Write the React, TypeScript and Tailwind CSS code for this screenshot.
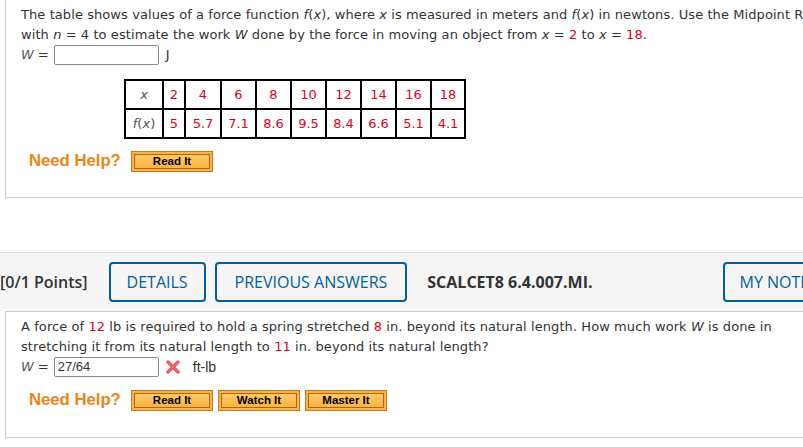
import React from "react";

const red = "text-[#e2001a]";

function HelpBtn({ label }: { label: string }) {
  return (
    <div className="w-[82px] h-[21px] border border-[#c27a25] bg-[#fbb443] p-[2px] flex">
      <div className="flex-1 border border-[#a9661c] bg-gradient-to-b from-[#ffc964] to-[#fbb443] flex items-center justify-center text-[11.5px] font-bold text-black leading-none" style={{ fontFamily: "Arial, 'Liberation Sans', sans-serif" }}>
        {label}
      </div>
    </div>
  );
}

function NeedHelp({ buttons }: { buttons: string[] }) {
  return (
    <div className="flex items-center ml-[8px]">
      <span className="w-[102px] text-[16.7px] font-bold text-[#ef8416] leading-none" style={{ fontFamily: "Arial, 'Liberation Sans', sans-serif" }}>
        Need Help?
      </span>
      <div className="flex gap-[5px]">
        {buttons.map((b) => (
          <HelpBtn key={b} label={b} />
        ))}
      </div>
    </div>
  );
}

const xs = ["2", "4", "6", "8", "10", "12", "14", "16", "18"];
const fs = ["5", "5.7", "7.1", "8.6", "9.5", "8.4", "6.6", "5.1", "4.1"];
const widths = ["w-[22px]", "w-[36px]", "w-[35px]", "w-[35px]", "w-[35px]", "w-[35px]", "w-[35px]", "w-[35px]", "w-[34px]"];

export default function App() {
  return (
    <div className="w-[803px] h-[447px] overflow-hidden bg-white text-[#333]" style={{ fontFamily: "Verdana, 'DejaVu Sans', sans-serif" }}>
      {/* Panel 1 */}
      <div className="ml-[5px] w-[900px] h-[198px] border-l border-b border-[#ccc] pl-[15px] pt-[5px] text-[13px] leading-[20px]">
        <div className="whitespace-nowrap tracking-[0.08px]">
          The table shows values of a force function <i>f</i>(<i>x</i>), where <i>x</i> is measured in meters and <i>f</i>(<i>x</i>) in newtons. Use the Midpoint Rule
        </div>
        <div className="whitespace-nowrap tracking-[0.08px]">
          with <i>n</i> = 4 to estimate the work <i>W</i> done by the force in moving an object from <i>x</i> = <span className={red}>2</span> to <i>x</i> = <span className={red}>18</span>.
        </div>
        <div className="flex items-center h-[20px]">
          <i className="text-[#555]">W</i>
          <span className="ml-[4px]">=</span>
          <div className="ml-[5px] w-[105px] h-[20px] border border-[#888] rounded-[2px]" />
          <span className="ml-[7px]">J</span>
        </div>
        <table className="mt-[14px] ml-[103px] border-collapse text-center">
          <tbody>
            <tr className="h-[29px]">
              <td className="w-[38px] border-2 border-black italic text-[#555]">x</td>
              {xs.map((v, i) => (
                <td key={i} className={`${widths[i]} border-2 border-black ${red}`}>{v}</td>
              ))}
            </tr>
            <tr className="h-[29px]">
              <td className="border-2 border-black text-[#555]"><i>f</i>(<i>x</i>)</td>
              {fs.map((v, i) => (
                <td key={i} className={`border-2 border-black ${red}`}>{v}</td>
              ))}
            </tr>
          </tbody>
        </table>
        <div className="mt-[12px]">
          <NeedHelp buttons={["Read It"]} />
        </div>
      </div>

      <div className="h-[54px]" />

      {/* Header bar */}
      <div className="border-t border-[#ddd] bg-[#f5f5f5] h-[59px] flex items-center text-[16px]" style={{ fontFamily: "'Open Sans', sans-serif" }}>
        <span className="font-semibold text-[#333] text-[16px]">[0/1 Points]</span>
        <div className="ml-[21px] h-[40px] px-[16px] border-2 border-[#00609c] rounded-[4px] flex items-center text-[#00609c]">DETAILS</div>
        <div className="ml-[9px] h-[40px] px-[18px] border-2 border-[#00609c] rounded-[4px] flex items-center text-[#00609c]">PREVIOUS ANSWERS</div>
        <span className="ml-[20px] font-bold text-[#333]">SCALCET8 6.4.007.MI.</span>
        <div className="ml-auto mr-[-32px] h-[40px] px-[15px] border-2 border-[#00609c] rounded-[4px] flex items-center text-[#00609c] whitespace-nowrap">MY NOTES</div>
      </div>

      {/* Panel 2 */}
      <div className="ml-[5px] w-[900px] h-[127px] border-l border-t border-b border-[#ccc] pl-[15px] pt-[5px] text-[13px] leading-[20px]">
        <div className="whitespace-nowrap tracking-[0.08px]">
          A force of <span className={red}>12</span> lb is required to hold a spring stretched <span className={red}>8</span> in. beyond its natural length. How much work <i>W</i> is done in
        </div>
        <div className="whitespace-nowrap tracking-[0.08px]">
          stretching it from its natural length to <span className={red}>11</span> in. beyond its natural length?
        </div>
        <div className="flex items-center h-[20px]">
          <i className="text-[#555]">W</i>
          <span className="ml-[4px]">=</span>
          <div className="ml-[5px] w-[105px] h-[20px] border border-[#888] rounded-[2px] flex items-center pl-[3px] text-[13px]" style={{ fontFamily: "Arial, 'Liberation Sans', sans-serif" }}>
            27/64
          </div>
          <svg className="ml-[7px]" width="14" height="14" viewBox="0 0 14 14">
            <path d="M2 2 L12 12 M12 2 L2 12" stroke="#e9545a" strokeWidth="3.2" strokeLinecap="round" />
            <path d="M2.5 2.5 L11.5 11.5 M11.5 2.5 L2.5 11.5" stroke="#f27a7e" strokeWidth="1" strokeLinecap="round" />
          </svg>
          <span className="ml-[13px]" style={{ fontFamily: "Arial, 'Liberation Sans', sans-serif", fontSize: "14px" }}>ft-lb</span>
        </div>
        <div className="mt-[13px]">
          <NeedHelp buttons={["Read It", "Watch It", "Master It"]} />
        </div>
      </div>
    </div>
  );
}
